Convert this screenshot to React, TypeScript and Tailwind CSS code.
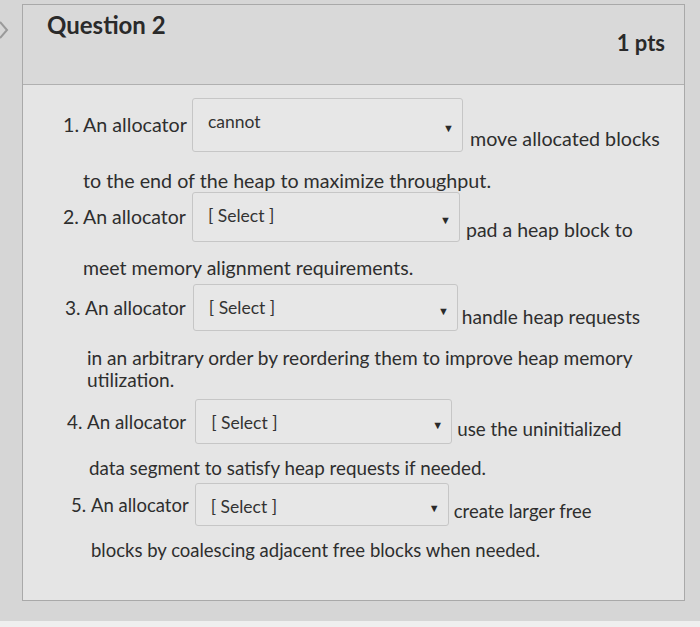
const items = [
  {
    num: "1.",
    value: "cannot",
    after: "move allocated blocks",
    rest: ["to the end of the heap to maximize throughput."],
    row: "mt-0 pl-[40px] text-[19.7px]",
    select: "w-[271px] h-[54px] ml-[5px]",
    afterCls: "ml-[7px] mb-[2px]",
    restCls: "mt-[18px]",
  },
  {
    num: "2.",
    value: "[ Select ]",
    after: "pad a heap block to",
    rest: ["meet memory alignment requirements."],
    row: "mt-0 pl-[40px] text-[19.5px]",
    select: "w-[268px] h-[50px] ml-[6px]",
    afterCls: "ml-[6px] mb-[1px]",
    restCls: "mt-[15px]",
  },
  {
    num: "3.",
    value: "[ Select ]",
    after: "handle heap requests",
    rest: [
      "in an arbitrary order by reordering them to improve heap memory",
      "utilization.",
    ],
    row: "mt-[5px] pl-[42px] text-[19.1px]",
    select: "w-[265px] h-[47px] ml-[7px]",
    afterCls: "ml-[4px] mb-[3px]",
    restCls: "mt-[16px] pl-[2px]",
  },
  {
    num: "4.",
    value: "[ Select ]",
    after: "use the uninitialized",
    rest: ["data segment to satisfy heap requests if needed."],
    row: "mt-[8px] pl-[44px] text-[18.8px]",
    select: "w-[257px] h-[45px] ml-[9px]",
    afterCls: "ml-[5px] mb-[4px]",
    restCls: "mt-[13px] pl-[2px]",
  },
  {
    num: "5.",
    value: "[ Select ]",
    after: "create larger free",
    rest: ["blocks by coalescing adjacent free blocks when needed."],
    row: "mt-[4px] pl-[48px] text-[18.5px]",
    select: "w-[254px] h-[43px] ml-[6px]",
    afterCls: "ml-[5px] mb-[4px]",
    restCls: "mt-[13px]",
  },
];

function SelectBox({ value, cls }: { value: string; cls: string }) {
  return (
    <div
      className={`${cls} relative shrink-0 border border-[#c6c6c6] rounded-[3px] bg-[#e7e7e7] pl-[15px] pt-[12px] text-[17.5px] leading-[22px] text-[#333]`}
    >
      {value}
      <span className="absolute right-[8px] top-1/2 -translate-y-[3px] text-[11px] leading-none text-[#2a2a2a]">
        ▼
      </span>
    </div>
  );
}

export default function App() {
  return (
    <div
      className="w-[700px] h-[627px] bg-[#d6d6d6] flex flex-col overflow-hidden text-[#2e2e2e]"
      style={{ fontFamily: "Lato, 'Open Sans', sans-serif" }}
    >
      <div className="flex flex-1">
        <div className="w-[22px] shrink-0 pt-[20px]">
          <svg width="12" height="20" viewBox="0 0 12 20" className="-ml-[2px]">
            <path d="M2 2 L9 10 L2 18" fill="none" stroke="#9a9a9a" strokeWidth="2" />
          </svg>
        </div>
        <div className="w-[663px] h-[597px] mt-[4px] border border-[#a9a9a9] bg-[#e5e5e5] flex flex-col">
          <div className="h-[80px] bg-[#d9d9d9] border-b border-[#b0b0b0] flex justify-between pl-[24px] pr-[19px]">
            <h2 className="text-[24px] font-bold leading-none pt-[8px] text-[#2a2a2a]">Question 2</h2>
            <div className="text-[22px] font-bold leading-none pt-[27px] text-[#2a2a2a]">1 pts</div>
          </div>
          <div className="pt-[13px] leading-[22px]">
            {items.map((it) => (
              <div key={it.num} className={it.row}>
                <div className="pl-[20px] flex flex-col">
                  <div className="flex items-stretch">
                    <span className="self-center w-[20px] -ml-[20px] shrink-0">{it.num}</span>
                    <span className="self-center">An allocator</span>
                    <SelectBox value={it.value} cls={it.select} />
                    <span className={`self-end whitespace-nowrap ${it.afterCls}`}>{it.after}</span>
                  </div>
                  <div className={it.restCls}>
                    {it.rest.map((line) => (
                      <div key={line} className="whitespace-nowrap">{line}</div>
                    ))}
                  </div>
                </div>
              </div>
            ))}
          </div>
        </div>
      </div>
      <div className="h-[6px] bg-[#efefef]" />
    </div>
  );
}
